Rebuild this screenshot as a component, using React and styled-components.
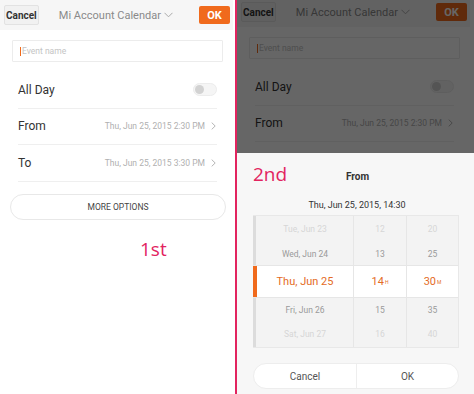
import React from "react";
import styled, { createGlobalStyle } from "styled-components";

const Global = createGlobalStyle`
  html, body { margin: 0; padding: 0; background: #fff; }
  body { font-family: Roboto, "Liberation Sans", sans-serif; width: 474px; height: 394px; overflow: hidden; }
  * { box-sizing: border-box; }
`;

const ORANGE = "#f06a1c";
const PINK = "#e2245f";

const Screen = styled.div`
  display: flex;
  width: 474px;
  height: 394px;
`;

const LeftPanel = styled.div`
  width: 235px;
  background: #fff;
  display: flex;
  flex-direction: column;
`;

const Separator = styled.div`
  width: 2px;
  background: ${PINK};
`;

const RightPanel = styled.div`
  width: 237px;
  display: flex;
  flex-direction: column;
  background: #f7f7f7;
`;

const Dimmed = styled.div`
  position: relative;
  height: 153px;
  overflow: hidden;
  background: #fff;
`;

const Overlay = styled.div`
  position: absolute;
  inset: 0;
  background: rgba(0, 0, 0, 0.6);
`;

const Form = styled.div`
  width: 235px;
  display: flex;
  flex-direction: column;
  margin-top: ${(p) => p.$shift || 0}px;
`;

const Header = styled.div`
  height: 30px;
  background: #f6f6f6;
  display: flex;
  align-items: center;
  padding: 0 3px 0 4px;
  margin-right: 2px;
`;

const CancelBtn = styled.div`
  height: 20px;
  padding: 0 1px;
  border: 1px solid #e2e2e2;
  background: #f1f1f1;
  border-radius: 2px;
  display: flex;
  align-items: center;
  font-size: 10px;
  font-weight: 700;
  color: #333;
`;

const Title = styled.div`
  flex: 1;
  display: flex;
  align-items: center;
  justify-content: center;
  gap: 3px;
  font-size: 11px;
  color: #8a8a8a;
  padding-right: 6px;
`;

const OkBtn = styled.div`
  width: 31px;
  height: 18px;
  background: ${ORANGE};
  color: #fff;
  font-size: 11px;
  font-weight: 700;
  border-radius: 2px;
  display: flex;
  align-items: center;
  justify-content: center;
`;

const Input = styled.div`
  margin: 10px 12px 0 12px;
  height: 22px;
  border: 1px solid #ececec;
  border-radius: 1px;
  display: flex;
  align-items: center;
  padding-left: 7px;
  font-size: 8.5px;
  color: #c4c4c4;
`;

const Caret = styled.span`
  width: 1px;
  height: 9px;
  background: ${ORANGE};
  margin-right: 1px;
`;

const Rows = styled.div`
  margin: 10px 18px 0 18px;
  display: flex;
  flex-direction: column;
`;

const Row = styled.div`
  height: 36.5px;
  display: flex;
  align-items: center;
  justify-content: space-between;
  border-bottom: 1px solid #efefef;
`;

const Label = styled.div`
  font-size: 12px;
  color: #333;
`;

const Value = styled.div`
  display: flex;
  align-items: center;
  gap: 6px;
  font-size: 8.5px;
  color: #b0b0b0;
  padding-right: 1px;
`;

const Toggle = styled.div`
  width: 24px;
  height: 13px;
  border-radius: 7px;
  background: #f5f5f5;
  border: 1px solid #ececec;
  display: flex;
  align-items: center;
  padding-left: 1px;
`;

const Knob = styled.div`
  width: 9px;
  height: 9px;
  border-radius: 50%;
  background: #d2d2d2;
`;

const MoreBtn = styled.div`
  margin: 12px 9px 0 10px;
  height: 26px;
  border: 1px solid #e8e8e8;
  border-radius: 13px;
  display: flex;
  align-items: center;
  justify-content: center;
  font-size: 8.5px;
  color: #444;
`;

const Marker = styled.div`
  font-family: "Open Sans", Roboto, sans-serif;
  font-size: 19px;
  color: ${PINK};
  line-height: 1;
  margin: ${(p) => p.$m};
`;

const Sheet = styled.div`
  flex: 1;
  display: flex;
  flex-direction: column;
  padding: 10px 15px 0 16px;
`;

const SheetTop = styled.div`
  display: flex;
  align-items: center;
  height: 22px;
`;

const SheetTitle = styled.div`
  flex: 1;
  text-align: center;
  font-size: 10px;
  font-weight: 700;
  color: #333;
  padding-right: 31px;
  margin-top: 4px;
`;

const SheetDate = styled.div`
  text-align: center;
  font-size: 9px;
  color: #333;
  margin-top: 15px;
  padding-left: 2px;
`;

const Picker = styled.div`
  margin-top: 5px;
  display: flex;
  flex-direction: column;
  border: 1px solid #e8e8e8;
  border-left: none;
  background: #f3f3f3;
`;

const PickRow = styled.div`
  display: grid;
  grid-template-columns: 101px 53px 1fr;
  height: ${(p) => p.$h}px;
  background: ${(p) => (p.$sel ? "#fff" : "transparent")};
  border-top: ${(p) => (p.$sel ? "1px solid #e6e6e6" : "none")};
  border-bottom: ${(p) => (p.$sel ? "1px solid #e6e6e6" : "none")};
`;

const Cell = styled.div`
  display: flex;
  align-items: center;
  justify-content: center;
  font-size: ${(p) => (p.$sel ? 11 : 8.5)}px;
  color: ${(p) => p.$c};
  border-right: ${(p) => (p.$last ? "none" : "1px solid #e6e6e6")};
  border-left: ${(p) => (p.$first ? `${p.$sel ? 4 : 3}px solid ${p.$sel ? ORANGE : "#dcdcdc"}` : "none")};
  padding-left: ${(p) => (p.$first && !p.$sel ? 1 : 0)}px;
`;

const Sup = styled.span`
  font-size: 5px;
  vertical-align: super;
  margin-left: 1px;
`;

const Actions = styled.div`
  margin-top: 15px;
  height: 26px;
  display: grid;
  grid-template-columns: 103px 1fr;
  background: #fff;
  border: 1px solid #ededed;
  border-radius: 13px;
`;

const Action = styled.div`
  display: flex;
  align-items: center;
  justify-content: center;
  font-size: 10px;
  color: #555;
  border-right: ${(p) => (p.$div ? "1px solid #eee" : "none")};
`;

const ChevronDown = () => (
  <svg width="9" height="6" viewBox="0 0 9 6">
    <path d="M0.5 0.8 L4.5 4.8 L8.5 0.8" fill="none" stroke="#aaa" strokeWidth="1" />
  </svg>
);

const ChevronRight = () => (
  <svg width="5" height="8" viewBox="0 0 5 8">
    <path d="M0.7 0.6 L4.2 4 L0.7 7.4" fill="none" stroke="#b5b5b5" strokeWidth="1" />
  </svg>
);

const EventForm = ({ shift, short }) => (
  <Form $shift={shift}>
    <Header>
      <CancelBtn>Cancel</CancelBtn>
      <Title>
        Mi Account Calendar <ChevronDown />
      </Title>
      <OkBtn>OK</OkBtn>
    </Header>
    <Input>
      <Caret />
      Event name
    </Input>
    <Rows>
      <Row>
        <Label>All Day</Label>
        <Toggle>
          <Knob />
        </Toggle>
      </Row>
      <Row>
        <Label>From</Label>
        <Value>
          Thu, Jun 25, 2015 2:30 PM <ChevronRight />
        </Value>
      </Row>
      {!short && (
        <Row>
          <Label>To</Label>
          <Value>
            Thu, Jun 25, 2015 3:30 PM <ChevronRight />
          </Value>
        </Row>
      )}
    </Rows>
  </Form>
);

const pickerRows = [
  { h: 26, c: "#d6d6d6", d: "Tue, Jun 23", hr: "12", mn: "20" },
  { h: 23, c: "#9a9a9a", d: "Wed, Jun 24", hr: "13", mn: "25" },
  { h: 33, c: "#e46c26", d: "Thu, Jun 25", hr: "14", mn: "30", sel: true },
  { h: 23, c: "#9a9a9a", d: "Fri, Jun 26", hr: "15", mn: "35" },
  { h: 26, c: "#d6d6d6", d: "Sat, Jun 27", hr: "16", mn: "40" },
];

export default function App() {
  return (
    <>
      <Global />
      <Screen>
        <LeftPanel>
          <EventForm />
          <MoreBtn>MORE OPTIONS</MoreBtn>
          <Marker $m="20px 0 0 140px">1st</Marker>
        </LeftPanel>
        <Separator />
        <RightPanel>
          <Dimmed>
            <EventForm shift={-3} short />
            <Overlay />
          </Dimmed>
          <Sheet>
            <SheetTop>
              <Marker $m="0">2nd</Marker>
              <SheetTitle>From</SheetTitle>
            </SheetTop>
            <SheetDate>Thu, Jun 25, 2015, 14:30</SheetDate>
            <Picker>
              {pickerRows.map((r) => (
                <PickRow key={r.d} $h={r.h} $sel={r.sel}>
                  <Cell $first $sel={r.sel} $c={r.c}>{r.d}</Cell>
                  <Cell $sel={r.sel} $c={r.c}>
                    {r.hr}
                    {r.sel && <Sup>H</Sup>}
                  </Cell>
                  <Cell $last $sel={r.sel} $c={r.c}>
                    {r.mn}
                    {r.sel && <Sup>M</Sup>}
                  </Cell>
                </PickRow>
              ))}
            </Picker>
            <Actions>
              <Action $div>Cancel</Action>
              <Action>OK</Action>
            </Actions>
          </Sheet>
        </RightPanel>
      </Screen>
    </>
  );
}
